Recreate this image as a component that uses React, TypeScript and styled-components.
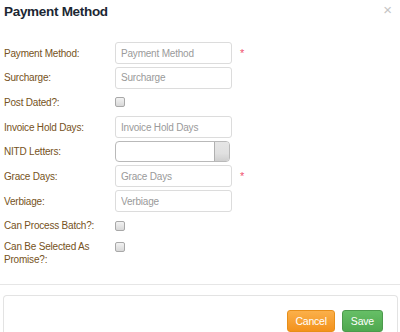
import React from "react";
import styled, { createGlobalStyle } from "styled-components";

const GlobalStyle = createGlobalStyle`
  html, body {
    margin: 0;
    padding: 0;
    background: #fff;
  }
  body {
    font-family: Tahoma, "Liberation Sans", Arial, sans-serif;
  }
`;

const Dialog = styled.div`
  width: 400px;
  height: 332px;
  overflow: hidden;
  background: #fff;
  display: flex;
  flex-direction: column;
`;

const Header = styled.div`
  display: flex;
  justify-content: space-between;
  align-items: flex-start;
  padding: 4px 8px 0 4px;
  height: 42px;
  box-sizing: border-box;
`;

const Title = styled.h3`
  margin: 0;
  font-size: 13.5px;
  line-height: 16px;
  font-weight: bold;
  color: #1c2733;
  letter-spacing: -0.3px;
`;

const Close = styled.span`
  color: #c4c4c4;
  font-size: 15px;
  line-height: 14px;
  margin-top: -1px;
  cursor: pointer;
`;

const Form = styled.div`
  display: flex;
  flex-direction: column;
  gap: 2.7px;
  padding: 0 0 0 4px;
`;

const Row = styled.div<{ $top?: boolean }>`
  display: grid;
  grid-template-columns: 111px max-content max-content;
  justify-content: start;
  align-items: ${(p) => (p.$top ? "start" : "center")};
  min-height: 22px;
`;

const Label = styled.label`
  font-size: 10px;
  letter-spacing: -0.2px;
  line-height: 13px;
  color: #765222;
  padding-right: 6px;
`;

const Input = styled.input`
  width: 117px;
  height: 22px;
  box-sizing: border-box;
  border: 1px solid #dcdcdc;
  border-radius: 3px;
  padding: 0 5px;
  font-family: inherit;
  font-size: 10px;
  letter-spacing: -0.2px;
  color: #555;
  outline: none;
  &::placeholder {
    color: #9a9a9a;
  }
`;

const Required = styled.span`
  color: #f0506e;
  font-size: 11px;
  margin-left: 8px;
  line-height: 10px;
`;

const Check = styled.span<{ $offset?: number }>`
  display: block;
  width: 8px;
  height: 8px;
  border: 1px solid #a8a8a8;
  border-radius: 2px;
  background: linear-gradient(#f2f2f2, #d8d8d8);
  margin-top: ${(p) => p.$offset ?? 0}px;
`;

const Select = styled.div`
  width: 115px;
  height: 21px;
  box-sizing: border-box;
  border: 1px solid #b9b9b9;
  border-radius: 4px;
  background: #fff;
  display: flex;
  justify-content: flex-end;
  overflow: hidden;
`;

const SelectButton = styled.span`
  width: 14px;
  height: 100%;
  border-left: 1px solid #b0b0b0;
  background: linear-gradient(#e6e6e6 0%, #e0e0e0 60%, #cfcfcf 100%);
`;

const Divider = styled.div`
  margin-top: 18px;
  height: 1px;
  background: #e6e6e6;
`;

const Footer = styled.div`
  margin: 10px 2px 0 3px;
  border: 1px solid #e3e3e3;
  border-bottom: none;
  border-radius: 4px 4px 0 0;
  padding: 14px 14px 0 0;
  display: flex;
  justify-content: flex-end;
  align-items: flex-start;
  gap: 7px;
  flex: 1;
`;

const Button = styled.button<{ $variant: "cancel" | "save" }>`
  height: 22px;
  padding: 0 ${(p) => (p.$variant === "cancel" ? 7 : 8)}px;
  font-family: inherit;
  font-size: 10.5px;
  letter-spacing: -0.2px;
  color: #fff;
  border-radius: 3px;
  cursor: pointer;
  border: 1px solid
    ${(p) => (p.$variant === "cancel" ? "#e78f1a" : "#4c9a4c")};
  background: ${(p) =>
    p.$variant === "cancel"
      ? "linear-gradient(#fbb04a, #f3921c)"
      : "linear-gradient(#66bf66, #4fa84f)"};
`;

const fields: { label: string; kind: "input" | "check" | "select"; required?: boolean }[] = [
  { label: "Payment Method:", kind: "input", required: true },
  { label: "Surcharge:", kind: "input" },
  { label: "Post Dated?:", kind: "check" },
  { label: "Invoice Hold Days:", kind: "input" },
  { label: "NITD Letters:", kind: "select" },
  { label: "Grace Days:", kind: "input", required: true },
  { label: "Verbiage:", kind: "input" },
  { label: "Can Process Batch?:", kind: "check" },
  { label: "Can Be Selected As Promise?:", kind: "check" },
];

export default function App() {
  return (
    <>
      <GlobalStyle />
      <Dialog>
        <Header>
          <Title>Payment Method</Title>
          <Close>×</Close>
        </Header>
        <Form>
          {fields.map((f, i) => {
            const multi = i === fields.length - 1;
            return (
              <Row key={f.label} $top={multi}>
                <Label>{f.label}</Label>
                {f.kind === "input" && <Input placeholder={f.label.replace(":", "")} />}
                {f.kind === "check" && <Check $offset={multi ? 2 : 0} />}
                {f.kind === "select" && (
                  <Select>
                    <SelectButton />
                  </Select>
                )}
                {f.required && <Required>*</Required>}
              </Row>
            );
          })}
        </Form>
        <Divider />
        <Footer>
          <Button $variant="cancel">Cancel</Button>
          <Button $variant="save">Save</Button>
        </Footer>
      </Dialog>
    </>
  );
}
